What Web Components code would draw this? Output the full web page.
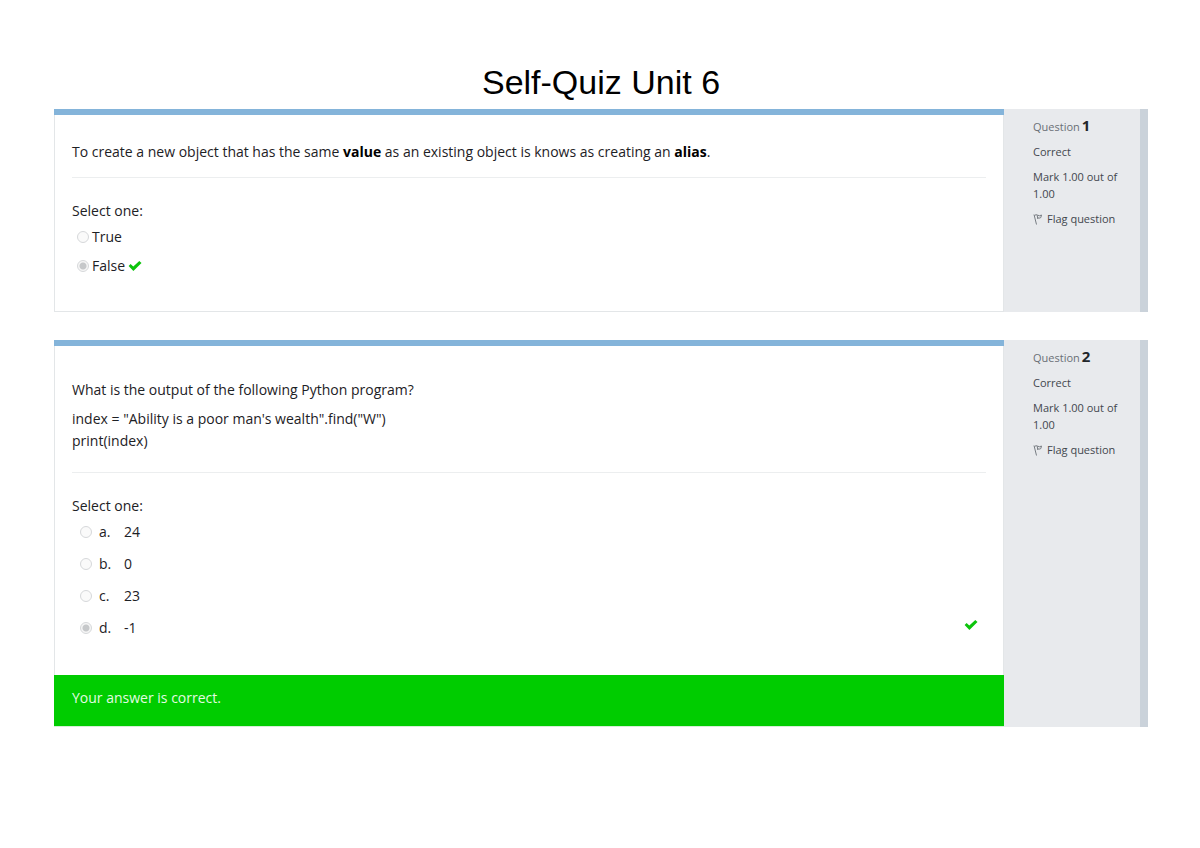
<!DOCTYPE html>
<html lang="en">
<head>
<meta charset="utf-8">
<meta name="viewport" content="width=device-width, initial-scale=1">
<title>Self-Quiz Unit 6</title>
<style>
  body { margin: 0; background: #fff; color: #1d2125; font: 14px/22px "Open Sans", "Noto Sans", sans-serif; }
</style>
</head>
<body>
<quiz-page>
  <span slot="title">Self-Quiz Unit 6</span>

  <quiz-question number="1" state="Correct" mark="Mark 1.00 out of 1.00">
    <quiz-stem>To create a new object that has the same <b>value</b> as an existing object is knows as creating an <b>alias</b>.</quiz-stem>
    <quiz-choices>
      <quiz-choice>True</quiz-choice>
      <quiz-choice checked tick>False</quiz-choice>
    </quiz-choices>
  </quiz-question>

  <quiz-question number="2" state="Correct" mark="Mark 1.00 out of 1.00">
    <quiz-stem spacious>What is the output of the following Python program?<span slot="code">index = "Ability is a poor man's wealth".find("W")<br>print(index)</span></quiz-stem>
    <quiz-choices lettered>
      <quiz-choice letter="a.">24</quiz-choice>
      <quiz-choice letter="b.">0</quiz-choice>
      <quiz-choice letter="c.">23</quiz-choice>
      <quiz-choice letter="d." checked tick>-1</quiz-choice>
    </quiz-choices>
    <span slot="feedback">Your answer is correct.</span>
  </quiz-question>
</quiz-page>

<script>
  class QuizPage extends HTMLElement {
    constructor() {
      super();
      this.attachShadow({ mode: "open" }).innerHTML = `
        <style>
          :host { display: block; padding: 62px 52px 48px 54px; }
          h1 { margin: 0 0 7px; color: #000; font: 34px/40px "Liberation Sans", Arial, sans-serif; text-align: center; }
          main { display: flex; flex-direction: column; gap: 28px; }
        </style>
        <h1><slot name="title"></slot></h1>
        <main><slot></slot></main>`;
    }
  }

  class QuizQuestion extends HTMLElement {
    connectedCallback() {
      if (this.shadowRoot) return;
      const hasFeedback = this.querySelector('[slot="feedback"]');
      this.attachShadow({ mode: "open" }).innerHTML = `
        <style>
          :host { display: grid; grid-template-columns: minmax(0, 1fr) 144px; }
          article { display: flex; flex-direction: column; border-top: 6px solid #84b4da; }
          .body { padding: 0 17px 34px; border: 1px solid #e3e6e8; border-top: 0; flex: 1; }
          .marked { border-bottom: 0; }
          .feedback { padding: 12px 18px 17px; background: #00cc00; color: #e2fbe2; border-bottom: 1px solid #d5efd5; }
          aside { display: flex; flex-direction: column; gap: 8px; padding: 8px 14px 0 29px;
                  background: #e8eaed; border-right: 8px solid #cad2da; color: #43474d; font-size: 11px; line-height: 17px; }
          h2, p { margin: 0; }
          h2 { display: flex; align-items: baseline; gap: 2px; font-size: 11px; line-height: 16px; font-weight: 400; color: #6a6f76; }
          h2 b { color: #22262a; font-size: 15px; line-height: 16px; }
          button { display: flex; align-items: center; gap: 5px; padding: 0; border: 0; background: none; color: inherit; font: inherit; }
        </style>
        <article>
          <div class="body ${hasFeedback ? "marked" : ""}"><slot></slot></div>
          ${hasFeedback ? '<div class="feedback"><slot name="feedback"></slot></div>' : ""}
        </article>
        <aside>
          <h2>Question <b>${this.getAttribute("number")}</b></h2>
          <p>${this.getAttribute("state")}</p>
          <p>${this.getAttribute("mark")}</p>
          <button type="button">
            <svg width="9" height="12" viewBox="0 0 9 12" fill="none" stroke="#777c82" aria-hidden="true">
              <path d="M1 1.5 3.5 11.5M1.5 2.5Q3 1 4.7 2.2T8.5 2L7.8 4.6Q6 5.6 4.8 4.8M4.2 2.2 4.8 6"/>
            </svg>
            <span>Flag question</span>
          </button>
        </aside>`;
    }
  }

  class QuizStem extends HTMLElement {
    constructor() {
      super();
      this.attachShadow({ mode: "open" }).innerHTML = `
        <style>
          :host { display: block; padding: 26px 0 14px; border-bottom: 1px solid #eceeef; }
          :host([spacious]) { padding: 33px 0 20px; }
          p { margin: 0; }
          ::slotted([slot="code"]) { display: block; margin-top: 7px; }
          ::slotted(b) { color: #000; }
        </style>
        <p><slot></slot></p>
        <slot name="code"></slot>`;
    }
  }

  class QuizChoices extends HTMLElement {
    constructor() {
      super();
      this.attachShadow({ mode: "open" }).innerHTML = `
        <style>
          :host { display: block; padding-top: 22px; }
          fieldset { margin: 0; padding: 0; border: 0; min-width: 0; }
          legend { padding: 0; }
          .list { display: flex; flex-direction: column; gap: 7px; padding: 4px 0 0 5px; }
          :host([lettered]) .list { gap: 10px; padding: 4px 8px 2px; }
        </style>
        <fieldset>
          <legend>Select one:</legend>
          <div class="list"><slot></slot></div>
        </fieldset>`;
    }
  }

  class QuizChoice extends HTMLElement {
    connectedCallback() {
      if (this.shadowRoot) return;
      const letter = this.getAttribute("letter");
      this.attachShadow({ mode: "open" }).innerHTML = `
        <style>
          :host { display: flex; align-items: center; gap: 3px; }
          :host([letter]) { justify-content: space-between; align-items: flex-start; }
          label { display: flex; align-items: center; gap: 3px; }
          :host([letter]) label { gap: 7px; }
          .letter { width: 18px; }
          input { appearance: none; width: 12px; height: 12px; margin: 0; border: 1px solid #d6d8da; border-radius: 50%; background: #fafafa; }
          input:checked { background: radial-gradient(circle, #c6c8ca 0 3px, #f6f6f6 4px); }
          svg { display: block; }
          :host([letter]) svg { margin-top: 2px; }
        </style>
        <label>
          <input type="radio" disabled ${this.hasAttribute("checked") ? "checked" : ""}>
          ${letter ? `<span class="letter">${letter}</span>` : ""}
          <span><slot></slot></span>
        </label>
        ${this.hasAttribute("tick") ? `
        <svg width="14" height="12" viewBox="0 0 14 12" role="img" aria-label="Correct">
          <path fill="#0cc40c" d="M.6 6.1 2.6 4 5.3 6.5 11.3.9 13.5 3 5.4 10.9Z"/>
        </svg>` : ""}`;
    }
  }

  customElements.define("quiz-page", QuizPage);
  customElements.define("quiz-question", QuizQuestion);
  customElements.define("quiz-stem", QuizStem);
  customElements.define("quiz-choices", QuizChoices);
  customElements.define("quiz-choice", QuizChoice);
</script>
</body>
</html>
